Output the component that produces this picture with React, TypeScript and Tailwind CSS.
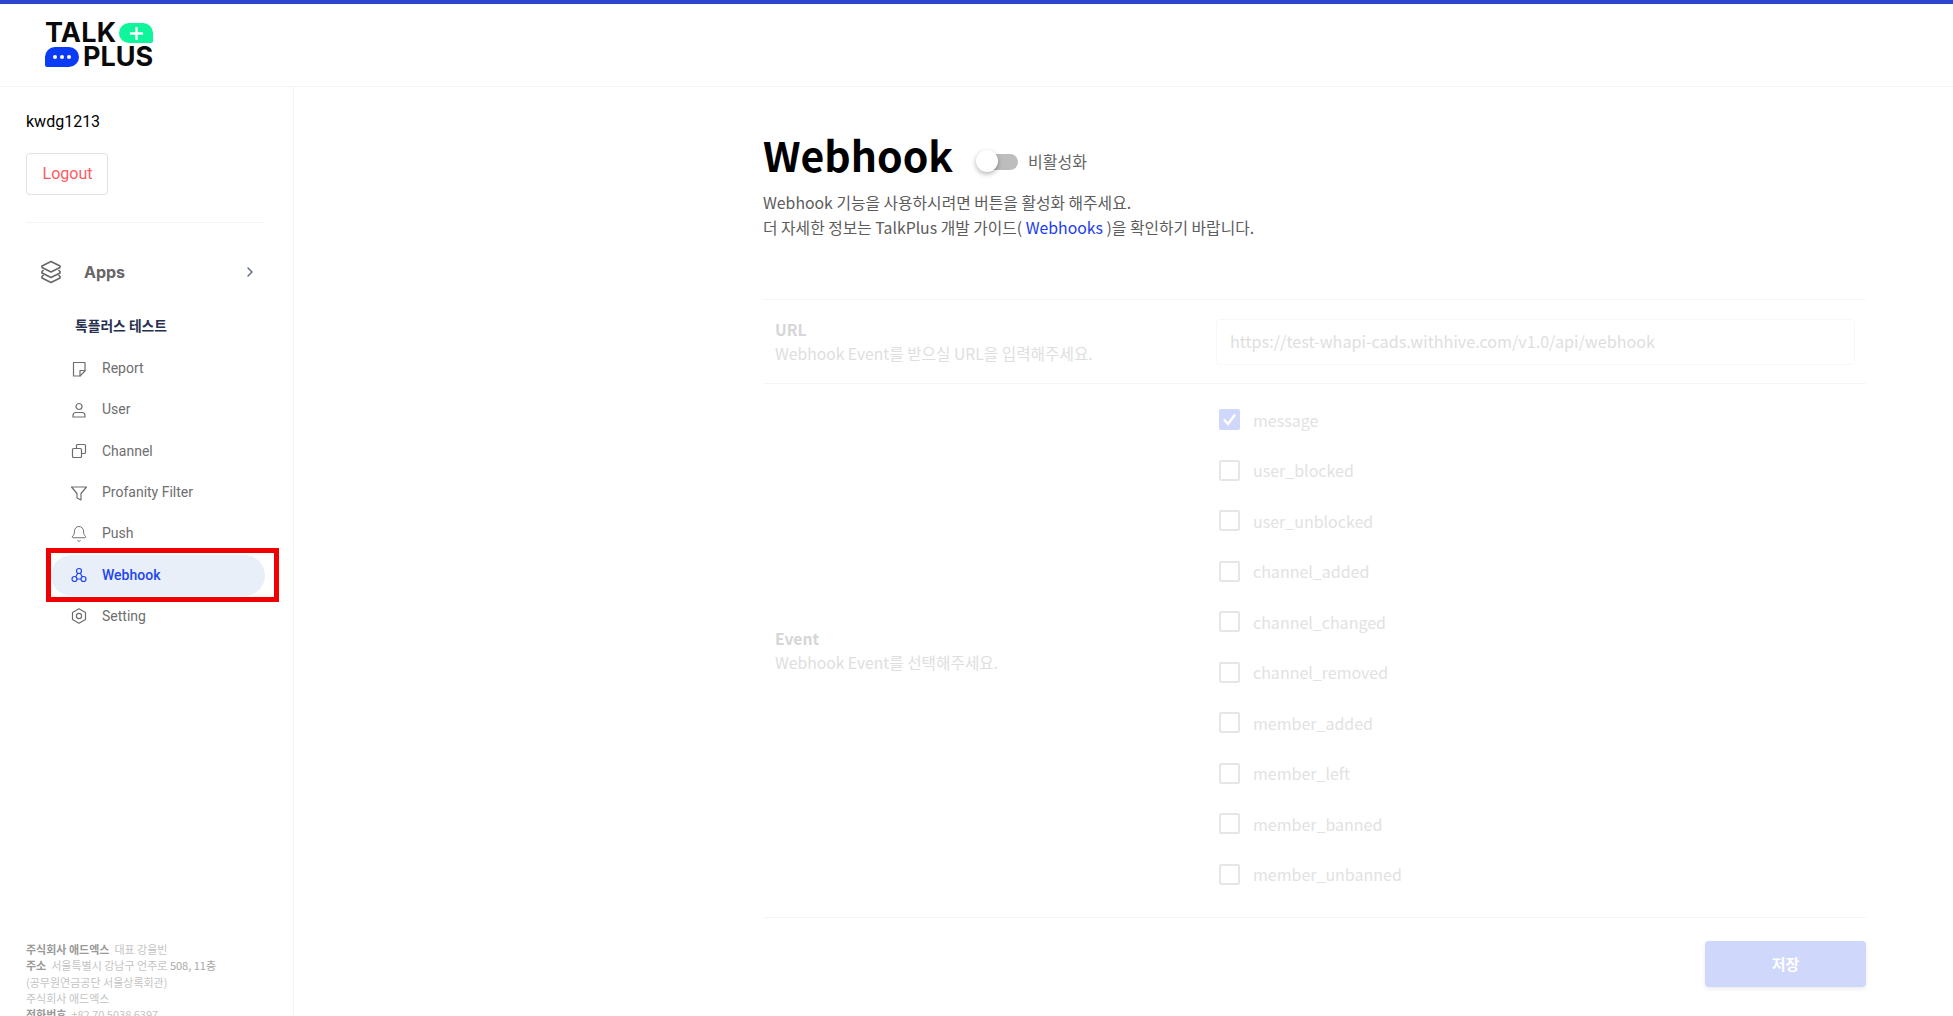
import { ChevronRight, Bell } from "lucide-react";
import type { ReactNode } from "react";

const kr = "font-['Noto_Sans_CJK_KR','Noto_Sans',sans-serif]";

const Ico = ({ children }: { children: ReactNode }) => (
  <svg width="18" height="18" viewBox="0 0 18 18" fill="none" stroke="currentColor" strokeWidth="1.2" strokeLinejoin="round" strokeLinecap="round">
    {children}
  </svg>
);

const navItems: { label: string; icon: ReactNode; active?: boolean }[] = [
  {
    label: "Report",
    icon: (
      <Ico>
        <path d="M3.500 2.500h11.500v8.500l-5 5H3.500z" />
        <path d="M15 10.500h-5v5.500" />
      </Ico>
    ),
  },
  {
    label: "User",
    icon: (
      <Ico>
        <circle cx="9" cy="5.500" r="3" />
        <path d="M3 16v-1.500c0-2 1.500-3 3-3h6c1.500 0 3 1 3 3V16z" />
      </Ico>
    ),
  },
  {
    label: "Channel",
    icon: (
      <Ico>
        <rect x="2.500" y="6.500" width="9" height="9" rx="1" />
        <path d="M6.500 6.500V3.500a1 1 0 0 1 1-1h7a1 1 0 0 1 1 1v7a1 1 0 0 1-1 1h-3" />
      </Ico>
    ),
  },
  {
    label: "Profanity Filter",
    icon: (
      <Ico>
        <path d="M1.500 3h15l-5.500 6.500V16l-4-2V9.500z" />
      </Ico>
    ),
  },
  { label: "Push", icon: <Bell size={18} strokeWidth={1.3} /> },
  {
    label: "Webhook",
    active: true,
    icon: (
      <Ico>
        <circle cx="9" cy="5" r="2.500" />
        <circle cx="4.500" cy="13" r="2.500" />
        <circle cx="13.500" cy="13" r="2.500" />
        <path d="M7.500 7.500 5.800 10.700M10.500 7.500l1.700 3.200M7 13h4" />
      </Ico>
    ),
  },
  {
    label: "Setting",
    icon: (
      <Ico>
        <path d="M9 1.800 15.500 5.400v7.200L9 16.200 2.500 12.600V5.400z" />
        <circle cx="9" cy="9" r="2.600" />
      </Ico>
    ),
  },
];

const events = [
  "message",
  "user_blocked",
  "user_unblocked",
  "channel_added",
  "channel_changed",
  "channel_removed",
  "member_added",
  "member_left",
  "member_banned",
  "member_unbanned",
];

const Logo = () => (
  <div className="flex flex-col gap-[4px] w-[110px] text-[#0a0a0a] font-['Inter',sans-serif] font-bold text-[27px] leading-[20px]">
    <div className="flex items-center h-[20px]">
      <span className="w-[74px] shrink-0 tracking-[0.2px]">TALK</span>
      <span className="w-[34px] h-[20px] rounded-t-[10px] rounded-bl-[10px] rounded-br-[2px] bg-[#0ff59b] flex items-center justify-center">
        <svg width="15" height="15" viewBox="0 0 16 16" stroke="#fff" strokeWidth="2.500">
          <path d="M8 1v14M1 8h14" />
        </svg>
      </span>
    </div>
    <div className="flex items-center h-[20px]">
      <span className="w-[34px] h-[20px] rounded-t-[10px] rounded-br-[10px] rounded-bl-[2px] bg-[#0b3bf5] flex items-center justify-center gap-[3px] shrink-0">
        <span className="w-1 h-1 rounded-full bg-white" />
        <span className="w-1 h-1 rounded-full bg-white" />
        <span className="w-1 h-1 rounded-full bg-white" />
      </span>
      <span className="ml-[4px]">PLUS</span>
    </div>
  </div>
);

const Sidebar = () => (
  <aside className="relative w-[294px] shrink-0 border-r border-[#f3f3f5] pl-[26px] pr-[28px] pt-[24px] overflow-hidden font-['Roboto',sans-serif]">
    <div className="text-[16px] leading-[22px] text-black">kwdg1213</div>
    <button className="mt-[20px] w-[82px] h-[42px] rounded-[4px] border border-[#e2e2e2] text-[#ff5a5f] text-[16px] pl-[1px]">Logout</button>
    <div className="mt-[27px] border-t border-[#f3f3f3]" />
    <div className="mt-[31px] h-[36px] flex items-center pl-[14px] pr-[7px] text-[#666]">
      <svg width="22" height="24" viewBox="0 0 22 24" fill="none" stroke="#666" strokeWidth="1.600" strokeLinejoin="round">
        <path d="M11 1.500 20 6v1.500L11 12 2 7.500V6z" />
        <path d="M3.500 10 2 11.500V13l9 4.500 9-4.500v-1.500L18.500 10" />
        <path d="M3.500 15 2 16.500V18l9 4.500 9-4.500v-1.500L18.500 15" />
      </svg>
      <span className="ml-[22px] text-[16px] font-bold font-['Inter',sans-serif] text-[#666]">Apps</span>
      <ChevronRight size={16} strokeWidth={2} className="ml-auto text-[#5a6488]" />
    </div>
    <div className={`mt-[25px] ml-[49px] text-[13.800px] leading-[20px] font-bold text-[#26304f] ${kr}`}>톡플러스 테스트</div>
    <div className="mt-[13px] ml-[25px] flex flex-col">
      {navItems.map((item) => (
        <div key={item.label} className={`h-[41.300px] flex items-center ${item.active ? "text-[#1e46f0]" : "text-[#6e6e6e]"}`}>
          <div className={`flex items-center w-full h-[41px] rounded-full pl-[19px] ${item.active ? "bg-[#e9eff9]" : ""}`}>
            <span className="w-[18px] flex justify-center shrink-0">{item.icon}</span>
            <span className={`ml-[14px] text-[14px] ${item.active ? "font-medium" : ""}`}>{item.label}</span>
          </div>
        </div>
      ))}
    </div>
    <div className={`absolute left-[26px] top-[854px] text-[11px] leading-[16.300px] text-[#c4c4c4] whitespace-nowrap ${kr}`}>
      <div><b className="text-[#9a9a9a] font-bold">주식회사 애드엑스</b>&nbsp; 대표 강율빈</div>
      <div><b className="text-[#9a9a9a] font-bold">주소</b>&nbsp; 서울특별시 강남구 언주로 <span className="text-[#a8a8a8]">508, 11층</span></div>
      <div>(공무원연금공단 서울상록회관)</div>
      <div>주식회사 애드엑스</div>
      <div><b className="text-[#9a9a9a] font-bold">전화번호</b>&nbsp; +82 70 5038 6397</div>
    </div>
  </aside>
);

const Main = () => (
  <main className={`flex-1 pl-[469px] pt-[35px] ${kr}`}>
    <div className="w-[1103px]">
      <div className="flex items-center">
        <h1 className="text-[41px] leading-[64px] font-bold text-black">Webhook</h1>
        <div className="relative ml-[24px] w-[41px] h-[16px] mt-[15px] rounded-full bg-[#bdbdbd]">
          <span className="absolute -left-[1px] -top-[4px] w-[22px] h-[22px] rounded-full bg-white shadow-[0_2px_5px_rgba(0,0,0,0.3)]" />
        </div>
        <span className="ml-[10px] mt-[14px] text-[16px] text-[#666]">비활성화</span>
      </div>
      <p className="mt-[5px] text-[15.800px] leading-[24.500px] text-[#5c5c5c]">
        Webhook 기능을 사용하시려면 버튼을 활성화 해주세요.
        <br />
        더 자세한 정보는 TalkPlus 개발 가이드( <span className="text-[#1a3cf0]">Webhooks</span> )을 확인하기 바랍니다.
      </p>
      <section className="mt-[59px] border-t border-[#f5f5f5]">
        <div className="flex items-center h-[84px] border-b border-[#f5f5f5]">
          <div className="w-[453px] pl-[12px] text-[15.700px] leading-[24px]">
            <div className="font-bold text-[#d6d6d6]">URL</div>
            <div className="text-[#dedede]">Webhook Event를 받으실 URL을 입력해주세요.</div>
          </div>
          <div className="w-[639px] h-[46px] rounded-[4px] border border-[#f8f8f8] pl-[13px] flex items-center text-[16.150px] text-[#dedede]">
            https://test-whapi-cads.withhive.com/v1.0/api/webhook
          </div>
        </div>
        <div className="flex items-center h-[534px] border-b border-[#f5f5f5]">
          <div className="w-[453px] pl-[12px] text-[15.700px] leading-[24px]">
            <div className="font-bold text-[#d6d6d6]">Event</div>
            <div className="text-[#dedede]">Webhook Event를 선택해주세요.</div>
          </div>
          <div className="flex flex-col gap-[29.500px] pl-[3px] mb-[7px]">
            {events.map((name, i) => (
              <div key={name} className="flex items-center h-[21px] text-[16px] text-[#e2e2e2]">
                {i === 0 ? (
                  <span className="w-[21px] h-[21px] rounded-[2px] bg-[#cfd8fb] flex items-center justify-center">
                    <svg width="15" height="13" viewBox="0 0 15 13" fill="none" stroke="#fff" strokeWidth="2.400">
                      <path d="M2 6.500 6 11l7-9.500" />
                    </svg>
                  </span>
                ) : (
                  <span className="w-[21px] h-[21px] rounded-[2px] border-2 border-[#e6e6e6]" />
                )}
                <span className="ml-[13px]">{name}</span>
              </div>
            ))}
          </div>
        </div>
      </section>
      <div className="mt-[23px] flex justify-end">
        <button className="w-[161px] h-[46px] rounded-[4px] bg-[#cfd8fb] text-white font-bold text-[15px] shadow-[0_2px_4px_rgba(0,0,0,0.08)]">저장</button>
      </div>
    </div>
  </main>
);

export default function App() {
  return (
    <div className="relative h-screen overflow-hidden bg-white flex flex-col">
      <div className="h-[4px] bg-[#2e45cf] shrink-0" />
      <header className="h-[83px] shrink-0 border-b border-[#f3f3f3] pl-[45px] pt-[19px]">
        <Logo />
      </header>
      <div className="flex flex-1 min-h-0">
        <Sidebar />
        <Main />
      </div>
      <div className="absolute left-[46px] top-[548px] w-[233px] h-[54px] border-[5px] border-[#f00000]" />
    </div>
  );
}
